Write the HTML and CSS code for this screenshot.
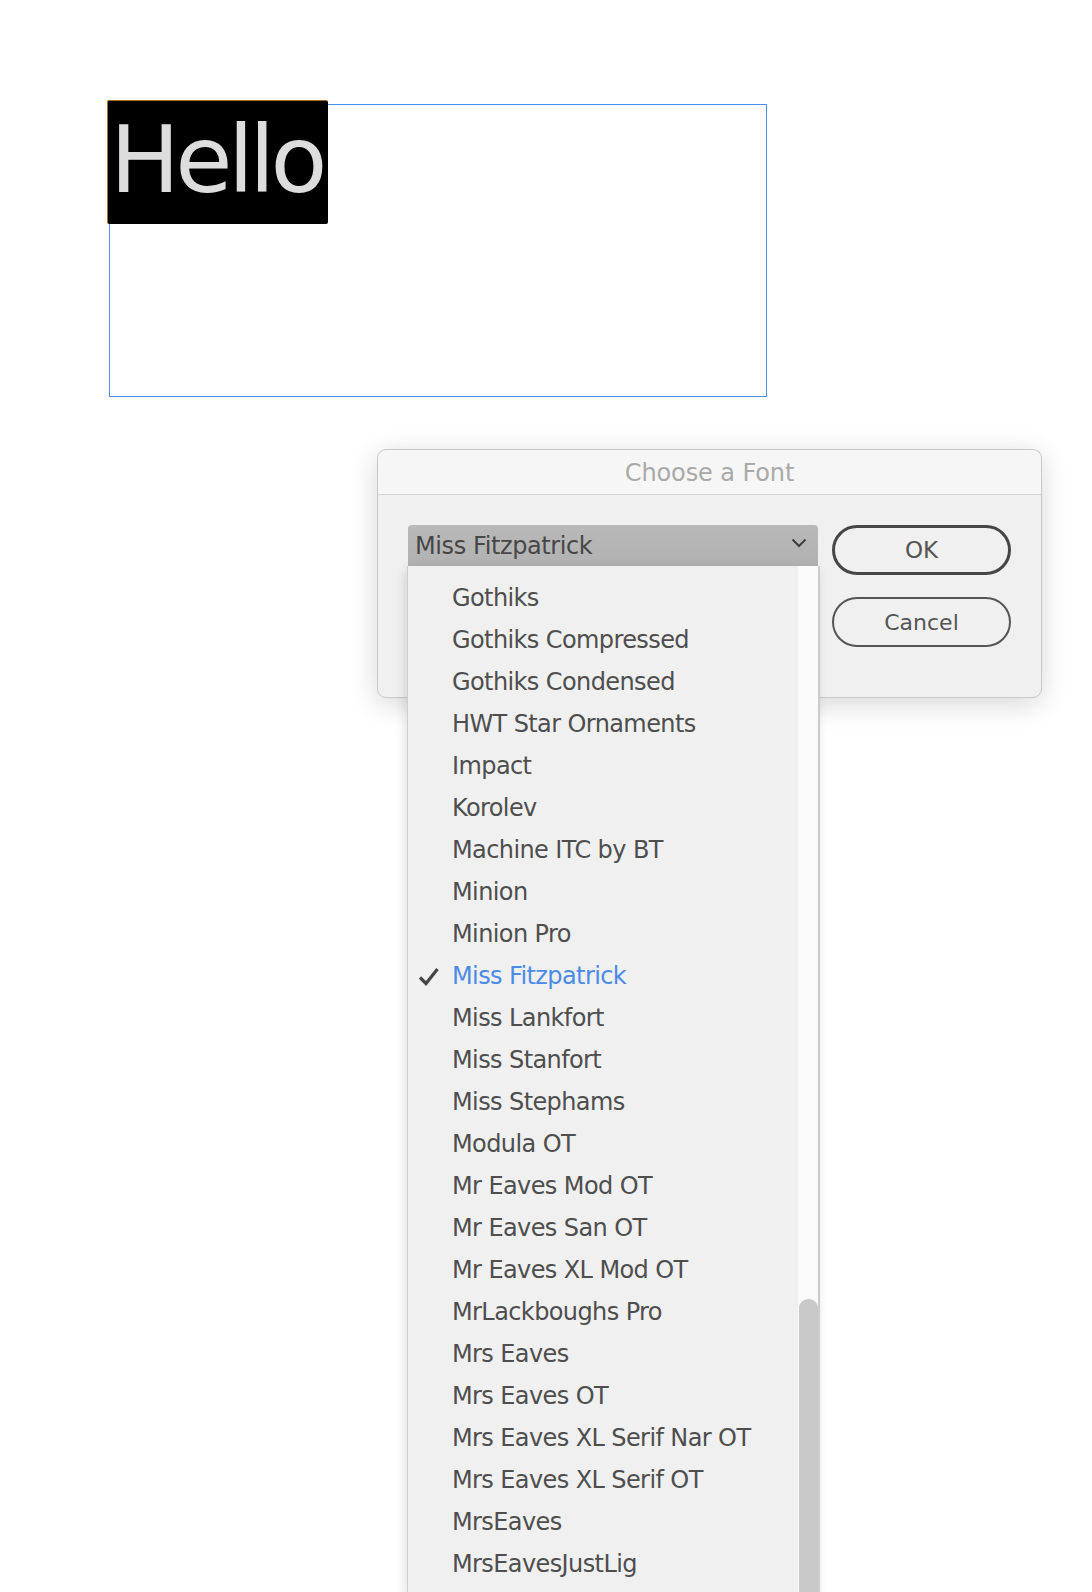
FILE: index.html
```html
<!DOCTYPE html>
<html lang="en">
<head>
    <meta charset="UTF-8">
    <meta name="viewport" content="width=device-width, initial-scale=1.0">
    <title>Choose a Font</title>
    <link rel="stylesheet" href="styles.css">
</head>
<body>
    <div class="text-frame">
        <div class="hello-box">Hello</div>
    </div>

    <div class="dialog">
        <div class="dialog-title">Choose a Font</div>
        <div class="dialog-body">
            <div class="font-select">
                <div class="select-box">
                    <span class="select-value">Miss Fitzpatrick</span>
                    <svg class="chevron" width="16" height="10" viewBox="0 0 16 10">
                        <path d="M1.5 1.5 L8 8 L14.5 1.5" fill="none" stroke="#3f3f3f" stroke-width="2"/>
                    </svg>
                </div>

                <div class="font-list">
                    <ul class="font-items">
                        <li>Gothiks</li>
                        <li>Gothiks Compressed</li>
                        <li>Gothiks Condensed</li>
                        <li>HWT Star Ornaments</li>
                        <li>Impact</li>
                        <li>Korolev</li>
                        <li>Machine ITC by BT</li>
                        <li>Minion</li>
                        <li>Minion Pro</li>
                        <li class="selected">
                            <svg class="check" width="22" height="20" viewBox="0 0 22 20">
                                <path d="M2 10.5 L8 16.5 L19.5 2" fill="none" stroke="#454545" stroke-width="3.2"/>
                            </svg>
                            Miss Fitzpatrick
                        </li>
                        <li>Miss Lankfort</li>
                        <li>Miss Stanfort</li>
                        <li>Miss Stephams</li>
                        <li>Modula OT</li>
                        <li>Mr Eaves Mod OT</li>
                        <li>Mr Eaves San OT</li>
                        <li>Mr Eaves XL Mod OT</li>
                        <li>MrLackboughs Pro</li>
                        <li>Mrs Eaves</li>
                        <li>Mrs Eaves OT</li>
                        <li>Mrs Eaves XL Serif Nar OT</li>
                        <li>Mrs Eaves XL Serif OT</li>
                        <li>MrsEaves</li>
                        <li>MrsEavesJustLig</li>
                    </ul>
                    <div class="scroll-track">
                        <div class="scroll-thumb"></div>
                    </div>
                </div>
            </div>

            <div class="buttons">
                <button class="btn btn-default">OK</button>
                <button class="btn">Cancel</button>
            </div>
        </div>
    </div>
</body>
</html>
```

FILE: styles.css
```css
html, body {
    height: 100%;
}

body {
    margin: 0;
    background-color: #fff;
    font-family: "DejaVu Sans", "Liberation Sans", sans-serif;
    overflow: hidden;
}

/* Canvas text frame */
.text-frame {
    position: relative;
    width: 656px;
    height: 291px;
    margin: 104px 0 0 109px;
    border: 1px solid #4b90f0;
}

.hello-box {
    position: absolute;
    top: -5px;
    left: -3px;
    width: 221px;
    height: 124px;
    box-sizing: border-box;
    padding-left: 2px;
    background-color: #000;
    border-top: 1px solid #a8701f;
    border-left: 1px solid #a8701f;
    border-radius: 2px;
    color: #dcdddc;
    font-size: 93px;
    line-height: 118px;
    letter-spacing: -4.6px;
    white-space: nowrap;
    overflow: hidden;
}

/* Dialog */
.dialog {
    width: 663px;
    margin: 52px 0 0 377px;
    border: 1px solid #c9c9c9;
    border-radius: 9px;
    background-color: #f0f0f0;
    box-shadow: 0 6px 28px rgba(0, 0, 0, 0.16);
}

.dialog-title {
    height: 44px;
    line-height: 46px;
    text-align: center;
    font-size: 24px;
    letter-spacing: -0.1px;
    color: #a9a9a9;
    background-color: #f6f6f6;
    border-bottom: 1px solid #d6d6d6;
    border-radius: 9px 9px 0 0;
}

.dialog-body {
    display: flex;
    align-items: flex-start;
    gap: 14px;
    padding: 30px 30px 50px 30px;
}

.font-select {
    position: relative;
    width: 411px;
}

.select-box {
    display: flex;
    align-items: center;
    justify-content: space-between;
    height: 41px;
    padding: 0 11px 0 7px;
    background: linear-gradient(#b9b9b9, #b1b1b1);
    border-radius: 4px 4px 0 0;
    color: #474747;
    font-size: 24px;
    letter-spacing: -0.4px;
}

.chevron {
    margin-top: -5px;
}

/* Popup list */
.font-list {
    position: absolute;
    top: 41px;
    left: -1px;
    width: 412px;
    height: 1030px;
    display: flex;
    background-color: #f0f0f0;
    border-left: 1px solid #cfcfcf;
    box-shadow: -2px 4px 10px rgba(0, 0, 0, 0.12);
    z-index: 5;
    overflow: hidden;
}

.font-items {
    flex: 1;
    list-style: none;
    margin: 0;
    padding: 11px 0 0 44px;
}

.font-items li {
    position: relative;
    height: 42px;
    line-height: 42px;
    font-size: 24px;
    letter-spacing: -0.6px;
    color: #4e4e4e;
    white-space: nowrap;
}

.font-items li.selected {
    color: #4b8be8;
}

.check {
    position: absolute;
    left: -34px;
    top: 12px;
}

.scroll-track {
    width: 22px;
    background-color: #fafafa;
    border-right: 2px solid #cbcbcb;
    padding-top: 733px;
    box-sizing: border-box;
}

.scroll-thumb {
    width: 19px;
    height: 400px;
    margin-left: 1px;
    background-color: #c9c9c9;
    border-radius: 9px 9px 0 0;
}

/* Buttons */
.buttons {
    display: flex;
    flex-direction: column;
    gap: 22px;
}

.btn {
    width: 179px;
    height: 50px;
    box-sizing: border-box;
    border: 2px solid #555;
    border-radius: 25px;
    background-color: transparent;
    color: #555;
    font-family: "DejaVu Sans", "Liberation Sans", sans-serif;
    font-size: 22px;
    padding: 0;
}

.btn-default {
    border: 3px solid #464646;
    font-size: 23px;
}
```
